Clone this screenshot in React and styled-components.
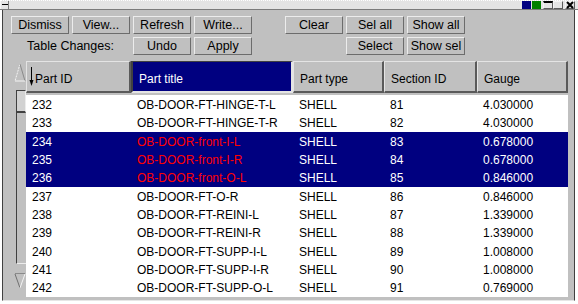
import React from 'react';
import styled, { createGlobalStyle } from 'styled-components';

const GlobalStyle = createGlobalStyle`
  html, body { margin: 0; padding: 0; background: #ffffff; }
  body { font-family: "Liberation Sans", Arial, sans-serif; font-size: 12px; color: #000; }
`;

const Window = styled.div`
  width: 578px;
  height: 304px;
  display: flex;
  flex-direction: column;
  background: #ffffff;
  overflow: hidden;
`;

const TitleBar = styled.div`
  flex: none;
  height: 8px;
  display: flex;
  align-items: stretch;
  background: #e4e4e4;
  border-top: 1px dotted #ffffff;
  border-bottom: 1px solid #7c7c7c;
  padding-right: 3px;
`;

const MenuBox = styled.div`
  width: 9px;
  border-right: 1px solid #7c7c7c;
  border-left: 1px solid #f4f4f4;
  display: flex;
  justify-content: center;
  padding-top: 3px;
  box-sizing: border-box;
`;

const Dash = styled.div`
  width: 6px;
  height: 1px;
  background: #000;
`;

const Spacer = styled.div`
  flex: 1;
`;

const WinSquare = styled.div`
  width: 9px;
  height: 8px;
  margin-right: 1px;
  background: ${p => p.$color};
`;

const WinButton = styled.div`
  width: 10px;
  height: 8px;
  box-sizing: border-box;
  border-left: 1px solid #f4f4f4;
  border-right: 1px solid #5c5c5c;
  border-bottom: 1px solid #5c5c5c;
  border-top: ${p => (p.$bar ? '2px solid #000' : '1px solid #f4f4f4')};
  margin-left: ${p => p.$gap || 0}px;
  background: #e4e4e4;
  display: flex;
  align-items: center;
  justify-content: center;
`;

const Panel = styled.div`
  flex: 1;
  margin: 0 3px 3px 2px;
  background: #c0c0c0;
  border-left: 1px solid #404040;
  border-right: 1px solid #404040;
  border-bottom: 1px solid #e6e6e6;
  display: flex;
  flex-direction: column;
`;

const Toolbar = styled.div`
  display: grid;
  grid-template-columns: repeat(4, 58px) 27px repeat(3, 58px);
  grid-auto-rows: 18px;
  column-gap: 3px;
  row-gap: 3px;
  padding: 6px 0 0 8px;
`;

const Button = styled.button`
  grid-column: ${p => p.$col};
  box-sizing: border-box;
  height: 18px;
  margin: 0;
  padding: 0;
  background: #c0c0c0;
  border: 1px solid;
  border-color: #ececec #6c6c6c #6c6c6c #ececec;
  font-family: "Liberation Sans", Arial, sans-serif;
  font-size: 12.5px;
  color: #000;
  line-height: 16px;
`;

const Label = styled.div`
  grid-column: 1 / span 2;
  text-align: center;
  line-height: 18px;
  font-size: 12.5px;
`;

const TableArea = styled.div`
  display: flex;
  margin-top: 6px;
  padding-left: 11px;
`;

const ScrollCol = styled.div`
  width: 12px;
  display: flex;
  flex-direction: column;
`;

const Track = styled.div`
  margin: 8px 0 0 2px;
  width: 10px;
  height: 174px;
  box-sizing: border-box;
  border-left: 1px solid #404040;
  border-bottom: 1px solid #ececec;
  display: flex;
  flex-direction: column;
`;

const Thumb = styled.div`
  height: 23px;
  box-sizing: border-box;
  border-top: 1px solid #404040;
  border-bottom: 2px solid #404040;
  border-right: 1px solid #ececec;
  background: #d2d2d2;
`;

const Table = styled.div`
  width: 542px;
  display: flex;
  flex-direction: column;
`;

const Cols = styled.div`
  display: grid;
  grid-template-columns: 105px 162px 91px 93px 91px;
`;

const HeaderRow = styled(Cols)`
  height: 32px;
  margin-bottom: 2px;
`;

const HeaderCell = styled.div`
  box-sizing: border-box;
  display: flex;
  align-items: center;
  padding: 4px 0 0 ${p => p.$pad || 6}px;
  background: ${p => (p.$active ? '#000080' : '#c0c0c0')};
  color: ${p => (p.$active ? '#ffffff' : '#000')};
  border-style: solid;
  border-width: ${p => (p.$active ? '1px 2px 2px 2px' : '1px 2px 2px 1px')};
  border-color: ${p =>
    p.$active
      ? '#404040 #e4e4e4 #e4e4e4 #404040'
      : '#e4e4e4 #5a5a5a #5a5a5a #e4e4e4'};
  font-size: 12px;
`;

const Body = styled.div`
  background: #ffffff;
`;

const Row = styled(Cols)`
  height: 18.33px;
  line-height: 18.33px;
  background: ${p => (p.$selected ? '#000080' : '#ffffff')};
  color: ${p => (p.$selected ? '#ffffff' : '#000')};
`;

const Cell = styled.div`
  padding-left: 6px;
  padding-top: 1px;
  white-space: nowrap;
  overflow: hidden;
  color: ${p => (p.$red ? '#ff0000' : 'inherit')};
`;

const SortArrow = () => (
  <svg width="6" height="20" viewBox="0 0 6 20" style={{ marginTop: -3 }}>
    <line x1="2.5" y1="0" x2="2.5" y2="16" stroke="#000" strokeWidth="1" />
    <polygon points="0.5,13 4.5,13 2.5,19" fill="#000" />
  </svg>
);

const UpArrow = () => (
  <svg width="12" height="19" viewBox="0 0 12 19" style={{ marginTop: 2 }}>
    <line x1="6" y1="1" x2="1" y2="18" stroke="#f4f4f4" strokeWidth="1" strokeDasharray="2 1" />
    <line x1="6" y1="1" x2="11" y2="18" stroke="#8a8a8a" strokeWidth="1" />
    <line x1="1" y1="18" x2="11" y2="18" stroke="#f4f4f4" strokeWidth="1" />
  </svg>
);

const DownArrow = () => (
  <svg width="12" height="16" viewBox="0 0 12 16" style={{ marginTop: 9 }}>
    <line x1="1" y1="0.5" x2="11" y2="0.5" stroke="#8a8a8a" strokeWidth="1" />
    <line x1="1" y1="1" x2="6" y2="15" stroke="#707070" strokeWidth="1" />
    <line x1="11" y1="1" x2="6" y2="15" stroke="#f4f4f4" strokeWidth="1" />
  </svg>
);

const CloseIcon = () => (
  <svg width="8" height="8" viewBox="0 0 8 8">
    <path d="M1 1 L7 7 M7 1 L1 7" stroke="#000" strokeWidth="2" />
  </svg>
);

const rows = [
  ['232', 'OB-DOOR-FT-HINGE-T-L', 'SHELL', '81', '4.030000'],
  ['233', 'OB-DOOR-FT-HINGE-T-R', 'SHELL', '82', '4.030000'],
  ['234', 'OB-DOOR-front-I-L', 'SHELL', '83', '0.678000', true],
  ['235', 'OB-DOOR-front-I-R', 'SHELL', '84', '0.678000', true],
  ['236', 'OB-DOOR-front-O-L', 'SHELL', '85', '0.846000', true],
  ['237', 'OB-DOOR-FT-O-R', 'SHELL', '86', '0.846000'],
  ['238', 'OB-DOOR-FT-REINI-L', 'SHELL', '87', '1.339000'],
  ['239', 'OB-DOOR-FT-REINI-R', 'SHELL', '88', '1.339000'],
  ['240', 'OB-DOOR-FT-SUPP-I-L', 'SHELL', '89', '1.008000'],
  ['241', 'OB-DOOR-FT-SUPP-I-R', 'SHELL', '90', '1.008000'],
  ['242', 'OB-DOOR-FT-SUPP-O-L', 'SHELL', '91', '0.769000'],
];

export default function App() {
  return (
    <Window>
      <GlobalStyle />
      <TitleBar>
        <MenuBox>
          <Dash />
        </MenuBox>
        <Spacer />
        <WinSquare $color="#000080" />
        <WinSquare $color="#008000" />
        <WinButton $bar $gap={1} />
        <WinButton />
        <WinButton $gap={2}>
          <CloseIcon />
        </WinButton>
      </TitleBar>
      <Panel>
        <Toolbar>
          <Button $col={1}>Dismiss</Button>
          <Button $col={2}>View...</Button>
          <Button $col={3}>Refresh</Button>
          <Button $col={4}>Write...</Button>
          <Button $col={6}>Clear</Button>
          <Button $col={7}>Sel all</Button>
          <Button $col={8}>Show all</Button>
          <Label>Table Changes:</Label>
          <Button $col={3}>Undo</Button>
          <Button $col={4}>Apply</Button>
          <Button $col={7}>Select</Button>
          <Button $col={8}>Show sel</Button>
        </Toolbar>
        <TableArea>
          <ScrollCol>
            <UpArrow />
            <Track>
              <Thumb />
            </Track>
            <DownArrow />
          </ScrollCol>
          <Table>
            <HeaderRow>
              <HeaderCell $pad={2}>
                <SortArrow />
                Part ID
              </HeaderCell>
              <HeaderCell $active>Part title</HeaderCell>
              <HeaderCell>Part type</HeaderCell>
              <HeaderCell>Section ID</HeaderCell>
              <HeaderCell>Gauge</HeaderCell>
            </HeaderRow>
            <Body>
              {rows.map(([id, title, type, sec, gauge, sel]) => (
                <Row key={id} $selected={sel}>
                  <Cell>{id}</Cell>
                  <Cell $red={sel}>{title}</Cell>
                  <Cell>{type}</Cell>
                  <Cell>{sec}</Cell>
                  <Cell>{gauge}</Cell>
                </Row>
              ))}
            </Body>
          </Table>
        </TableArea>
      </Panel>
    </Window>
  );
}
